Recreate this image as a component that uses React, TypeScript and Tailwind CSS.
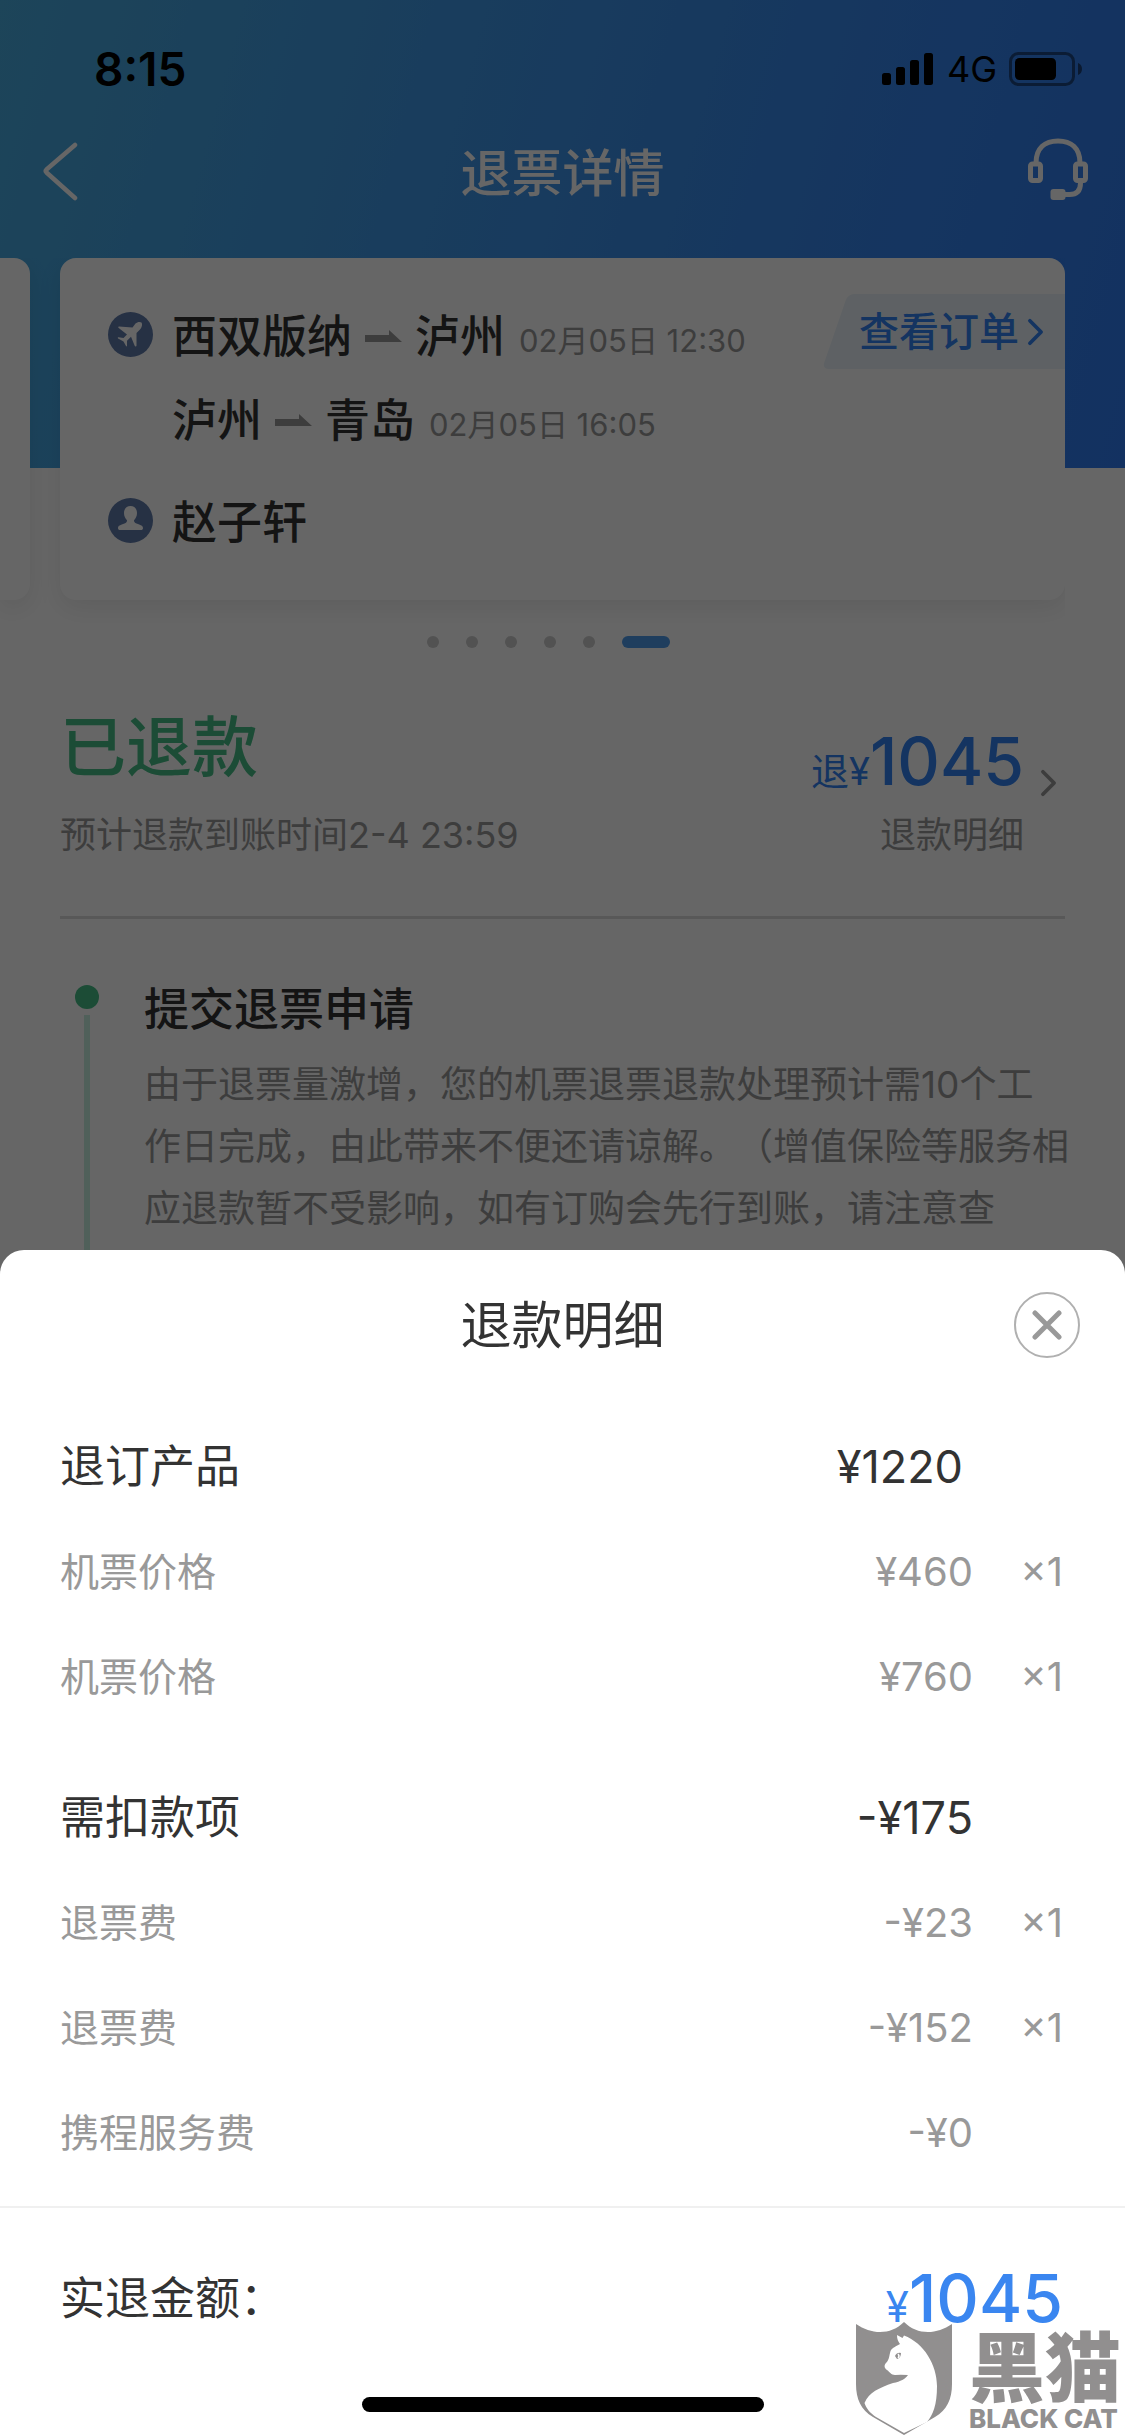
import type { ReactNode } from "react";

type Line = { label: string; amount: string; count?: string };
type Group = { title: string; total: string; totalClass: string; lines: Line[] };

const groups: Group[] = [
  {
    title: "退订产品",
    total: "¥1220",
    totalClass: "pr-2.5",
    lines: [
      { label: "机票价格", amount: "¥460", count: "×1" },
      { label: "机票价格", amount: "¥760", count: "×1" },
    ],
  },
  {
    title: "需扣款项",
    total: "-¥175",
    totalClass: "pr-0",
    lines: [
      { label: "退票费", amount: "-¥23", count: "×1" },
      { label: "退票费", amount: "-¥152", count: "×1" },
      { label: "携程服务费", amount: "-¥0" },
    ],
  },
];

const description = [
  "由于退票量激增，您的机票退票退款处理预计需10个工",
  "作日完成，由此带来不便还请谅解。（增值保险等服务相",
  "应退款暂不受影响，如有订购会先行到账，请注意查",
];

function StatusBar() {
  return (
    <div className="flex h-[138px] items-center justify-between pr-[42px] pl-[94px] text-black">
      <span className="text-[46px] leading-none font-semibold">8:15</span>
      <div className="flex items-center">
        <svg className="h-8 w-[51px]" viewBox="0 0 51 32" fill="currentColor" aria-hidden="true">
          <rect x="0" y="20" width="9" height="12" rx="2.5" />
          <rect x="14" y="14" width="9" height="18" rx="2.5" />
          <rect x="28" y="7" width="9" height="25" rx="2.5" />
          <rect x="42" y="0" width="9" height="32" rx="2.5" />
        </svg>
        <span className="ml-3.5 text-[36px] leading-none">4G</span>
        <svg className="ml-3 h-[34px] w-[74px]" viewBox="0 0 74 34" aria-hidden="true">
          <rect x="1.5" y="1.5" width="63" height="31" rx="8" fill="none" stroke="#000" strokeOpacity=".45" strokeWidth="3" />
          <rect x="6" y="6" width="41" height="22" rx="4.5" fill="#000" />
          <path d="M69 11c3 1 4 3.500 4 6s-1 5-4 6z" fill="#000" fillOpacity=".5" />
        </svg>
      </div>
    </div>
  );
}

function BackIcon() {
  return (
    <svg className="h-[60px] w-[38px]" viewBox="0 0 38 60" fill="none" stroke="currentColor" strokeWidth="4.5" strokeLinecap="round" strokeLinejoin="round" aria-hidden="true">
      <path d="M34 4 5.500 28.500q-1.500 1.500 0 3L34 57" />
    </svg>
  );
}

function HeadsetIcon() {
  return (
    <svg className="h-[66px] w-[60px]" viewBox="0 0 60 66" fill="none" stroke="currentColor" strokeWidth="5" aria-hidden="true">
      <path d="M8 27C8 12 17 5 30 5S52 12 52 27" />
      <rect x="2.500" y="28" width="10" height="16.500" rx="2" />
      <rect x="47.500" y="28" width="10" height="16.500" rx="2" />
      <path d="M52.500 45v2c0 8-4 11.500-11 11.500H36" />
      <rect x="22.500" y="53" width="15" height="11" rx="3" fill="currentColor" stroke="none" />
    </svg>
  );
}

function Chevron({ className }: { className: string }) {
  return (
    <svg className={className} viewBox="0 0 18 30" fill="none" stroke="currentColor" strokeWidth="4" strokeLinecap="round" strokeLinejoin="round" aria-hidden="true">
      <path d="M3 3 15 15 3 27" />
    </svg>
  );
}

function PlaneIcon() {
  return (
    <svg className="h-[45px] w-[45px] shrink-0" viewBox="0 0 45 45" aria-hidden="true">
      <circle cx="22.500" cy="22.500" r="22.500" fill="#5f7aaa" />
      <path d="M33.500 10.500c-1.500-1.200-4.500-.5-6 1L24.500 15.500 11 14.500c-1 0-1 1-.3 1.500l8.300 6.500-3.500 3.500-5-.7c-.8 0-1 .7-.4 1.200l5.400 3 2.500 4.500c.4.700 1 .5 1-.3v-5l4-4 3.800 9.300c.4.8 1.700.5 1.700-.5V21l3.500-3.500c2-2 2.700-5.500 1.500-7z" fill="#fff" />
    </svg>
  );
}

function PersonIcon() {
  return (
    <svg className="h-[45px] w-[45px] shrink-0" viewBox="0 0 45 45" aria-hidden="true">
      <circle cx="22.500" cy="22.500" r="22.500" fill="#5f7aaa" />
      <path d="M22.500 8c-4 0-6.500 3-6.500 7 0 3 1.200 5.500 3 7.200 0 1.800-.8 2.600-2.500 3.300C12.500 27 10 27.500 10 30c0 1.500.8 2 2 2h21c1.200 0 2-.5 2-2 0-2.500-2.500-3-6.500-4.500-1.700-.7-2.500-1.500-2.500-3.300 1.800-1.700 3-4.200 3-7.200 0-4-2.500-7-6.500-7z" fill="#fff" />
    </svg>
  );
}

function RouteArrow() {
  return (
    <svg className="mx-[13px] h-3 w-[37px]" viewBox="0 0 37 12" fill="#999" aria-hidden="true">
      <path d="M0 5h24V0l13 12H0z" />
    </svg>
  );
}

function Leg({ icon, from, to, time }: { icon?: ReactNode; from: string; to: string; time: string }) {
  return (
    <div className="flex h-[84px] items-center">
      <div className="w-[64px] shrink-0 pb-1">{icon}</div>
      <span className="text-[45px] leading-none font-medium">{from}</span>
      <RouteArrow />
      <span className="text-[45px] leading-none font-medium">{to}</span>
      <span className="mt-2 ml-3.5 text-[31px] leading-none text-[#999]">{time}</span>
    </div>
  );
}

function Watermark() {
  return (
    <div className="absolute right-0.5 bottom-0 flex items-start gap-4 text-[#918f8f]">
      <svg className="h-[115px] w-[98px]" viewBox="0 0 98 115" aria-hidden="true">
        <path d="M1 3c16 11 35 11 48-2 13 13 32 13 48 2v60c0 15-5 26-17 33L49 114 18 96C6 89 1 78 1 63z" fill="currentColor" />
        <path d="M42 14 47.500 17 49 14.500C69 22 82 44 82 65c0 19-4 29-10 36L49 112 21 96C15 92 11 87 9.500 82 14 71 24 67 38 62 46 60.500 50 58 53 54q-8-.5-13 0c-4 0-5-3-8-5-3-2-3-5-1-7 4-4 3-9 5-13 2-2.500 4-3 9-6-2-3-3-5-3-9z" fill="#fff" />
        <path d="M40 35q2-4 6-3 0 5-4 6z" fill="currentColor" />
        <path d="M43 33q2 2 0 4" stroke="#fff" strokeWidth="1.500" fill="none" />
      </svg>
      <div className="flex w-[154px] flex-col">
        <span className="font-['Noto_Sans_CJK_SC'] text-[76px] leading-[84px] font-black">黑猫</span>
        <span className="text-[26px] leading-7 font-extrabold whitespace-nowrap">BLACK CAT</span>
      </div>
    </div>
  );
}

function RefundPage() {
  return (
    <div className="bg-white text-[#333]">
      <header className="bg-[linear-gradient(105deg,#49acdf_0%,#409ae8_35%,#3788ee_70%,#307cf2_100%)] pb-[260px]">
        <StatusBar />
        <nav className="flex h-[70px] items-center justify-between px-[37px] text-white">
          <button type="button" aria-label="返回" className="w-[60px] pb-1 pl-1">
            <BackIcon />
          </button>
          <h1 className="text-[51px] leading-none font-medium">退票详情</h1>
          <button type="button" aria-label="客服" className="w-[60px] pb-2">
            <HeadsetIcon />
          </button>
        </nav>
      </header>

      <section className="mr-[60px] -mt-[210px] flex gap-[30px] overflow-hidden pb-9">
        <div className="w-[30px] shrink-0 rounded-r-2xl bg-white shadow-[0_8px_24px_rgba(0,0,0,0.08)]" />
        <div className="relative flex-1 rounded-2xl bg-white py-9 pl-12 shadow-[0_8px_24px_rgba(0,0,0,0.08)]">
          <Leg icon={<PlaneIcon />} from="西双版纳" to="泸州" time="02月05日 12:30" />
          <Leg from="泸州" to="青岛" time="02月05日 16:05" />
          <div className="mt-[18px] flex h-[84px] items-center">
            <div className="w-[64px] shrink-0 pb-1">
              <PersonIcon />
            </div>
            <span className="text-[45px] leading-none font-medium">赵子轩</span>
          </div>
          <button
            type="button"
            className="absolute top-9 right-0 flex h-[75px] items-center gap-2 overflow-hidden pr-[21px] pl-9 text-[#3283f2] before:absolute before:inset-y-0 before:-right-10 before:left-3 before:-skew-x-[19deg] before:rounded-md before:bg-[#ebf3f9]"
          >
            <span className="relative text-[40px] leading-none font-medium">查看订单</span>
            <Chevron className="relative h-7 w-[17px]" />
          </button>
        </div>
      </section>

      <div className="flex justify-center gap-[27px] pr-[29px]">
        {[0, 1, 2, 3, 4].map((i) => (
          <span key={i} className="h-3 w-3 rounded-full bg-[#ccc]" />
        ))}
        <span className="h-3 w-12 rounded-full bg-[#4f9cec]" />
      </div>

      <section className="mx-[60px] mt-[54px] flex justify-between border-b-[3px] border-[#ddd] pb-[54px]">
        <div>
          <h2 className="text-[66px] leading-[90px] font-medium text-[#46be87]">已退款</h2>
          <p className="mt-4 text-[36px] leading-[54px] text-[#999]">预计退款到账时间2-4 23:59</p>
        </div>
        <button type="button" className="flex items-center gap-4 pt-3.5 pr-2">
          <span className="flex flex-col items-end">
            <span className="text-[66px] leading-[90px] font-medium text-[#3283f2]">
              <span className="text-[38px] leading-none font-normal">退¥</span>1045
            </span>
            <span className="mt-0.5 text-[36px] leading-[54px] text-[#999]">退款明细</span>
          </span>
          <Chevron className="mb-3 h-[28px] w-[17px] text-[#999]" />
        </button>
      </section>

      <section className="ml-[75px] flex gap-[45px] pt-[60px]">
        <div className="flex w-6 shrink-0 flex-col items-center gap-1.5 pt-1.5">
          <span className="h-6 w-6 rounded-full bg-[#46be87]" />
          <span className="w-1.5 flex-1 bg-[#c8efe1]" />
        </div>
        <div className="pb-20">
          <h3 className="text-[45px] leading-[62px] font-medium">提交退票申请</h3>
          <p className="mt-[13px] text-[37px] leading-[62px] whitespace-nowrap text-[#999] [text-spacing-trim:space-all]">
            {description.map((line) => (
              <span key={line} className="block">
                {line}
              </span>
            ))}
          </p>
        </div>
      </section>
    </div>
  );
}

function RefundSheet() {
  return (
    <section role="dialog" aria-labelledby="sheet-title" className="relative rounded-t-3xl bg-white text-[#333]">
      <div className="flex h-[150px] items-center justify-between px-[45px]">
        <span className="w-[66px]" />
        <h2 id="sheet-title" className="text-[51px] leading-none">
          退款明细
        </h2>
        <button type="button" aria-label="关闭" className="flex h-[66px] w-[66px] items-center justify-center rounded-full border-2 border-[#b0b0b0] text-[#999]">
          <svg className="h-[30px] w-[30px]" viewBox="0 0 30 30" fill="none" stroke="currentColor" strokeWidth="5" strokeLinecap="round" aria-hidden="true">
            <path d="M3 3 27 27M27 3 3 27" />
          </svg>
        </button>
      </div>

      <div className="flex flex-col gap-9 pt-3.5 pr-[62px] pb-[21px] pl-[60px]">
        {groups.map((group) => (
          <table key={group.title} className="w-full">
            <thead>
              <tr className="h-[105px] text-[45px] leading-none">
                <th scope="col" className="p-0 text-left font-normal">
                  {group.title}
                </th>
                <th scope="col" className="p-0 text-right font-normal">
                  <span className={group.totalClass}>{group.total}</span>
                </th>
                <th className="w-[90px] p-0" />
              </tr>
            </thead>
            <tbody>
              {group.lines.map((line, i) => (
                <tr key={i} className="h-[105px] text-[40px] leading-none text-[#999]">
                  <td className="p-0 text-[39px]">{line.label}</td>
                  <td className="p-0 text-right">{line.amount}</td>
                  <td className="w-[90px] p-0 text-right">{line.count}</td>
                </tr>
              ))}
            </tbody>
          </table>
        ))}
      </div>

      <div className="flex h-[182px] items-center justify-between border-t-2 border-[#f0f0f0] pr-[62px] pl-[60px]">
        <span className="text-[45px] leading-none">实退金额：</span>
        <span className="text-[66px] leading-none font-medium text-[#3a86f0]">
          <span className="text-[42px] leading-none font-normal">¥</span>1045
        </span>
      </div>
      <div className="mx-auto mt-[9px] h-[39px] w-[402px]">
        <div className="h-[15px] rounded-full bg-black" />
      </div>
      <Watermark />
    </section>
  );
}

export default function App() {
  return (
    <main className="relative h-screen overflow-hidden bg-white font-['Inter','Noto_Sans_CJK_SC',sans-serif]" lang="zh-CN">
      <RefundPage />
      <div className="absolute inset-0 flex flex-col justify-end bg-black/60">
        <RefundSheet />
      </div>
    </main>
  );
}
